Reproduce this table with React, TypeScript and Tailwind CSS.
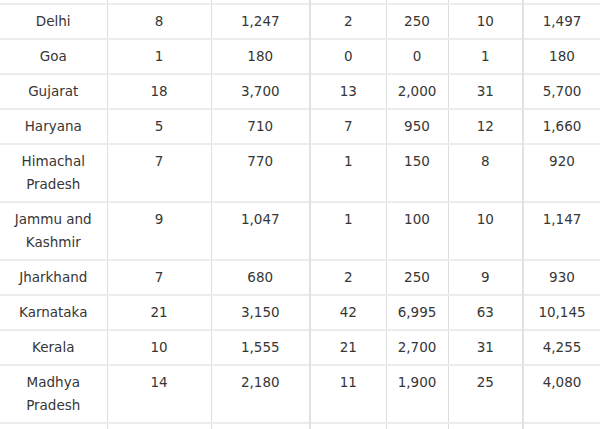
import React from "react";

type Row = [string, string, string, string, string, string, string];

const rows: Row[] = [
  ["", "", "", "", "", "", ""],
  ["Delhi", "8", "1,247", "2", "250", "10", "1,497"],
  ["Goa", "1", "180", "0", "0", "1", "180"],
  ["Gujarat", "18", "3,700", "13", "2,000", "31", "5,700"],
  ["Haryana", "5", "710", "7", "950", "12", "1,660"],
  ["Himachal Pradesh", "7", "770", "1", "150", "8", "920"],
  ["Jammu and Kashmir", "9", "1,047", "1", "100", "10", "1,147"],
  ["Jharkhand", "7", "680", "2", "250", "9", "930"],
  ["Karnataka", "21", "3,150", "42", "6,995", "63", "10,145"],
  ["Kerala", "10", "1,555", "21", "2,700", "31", "4,255"],
  ["Madhya Pradesh", "14", "2,180", "11", "1,900", "25", "4,080"],
  ["", "", "", "", "", "", ""],
];

const cellBorders = [
  "border-r border-r-[#dedede]",
  "border-r border-r-[#dedede]",
  "border-r-2 border-r-[#e2e2e2]",
  "border-r border-r-[#dedede]",
  "border-r border-r-[#dedede]",
  "border-r-2 border-r-[#e2e2e2]",
  "",
];

export default function App() {
  return (
    <div className="w-[600px] h-[429px] overflow-hidden bg-white">
      <table
        className="w-[600px] table-fixed border-collapse -mt-[30px] text-[13.5px] leading-[23px] text-[#363636]"
        style={{ fontFamily: '"DejaVu Sans", "Noto Sans", sans-serif' }}
      >
        <colgroup>
          <col className="w-[107px]" />
          <col className="w-[104px]" />
          <col className="w-[99px]" />
          <col className="w-[76px]" />
          <col className="w-[62px]" />
          <col className="w-[75px]" />
          <col className="w-[77px]" />
        </colgroup>
        <tbody>
          {rows.map((r, i) => (
            <tr key={i} className="border-b-2 border-b-[#ececec]">
              {r.map((c, j) => (
                <td
                  key={j}
                  className={`align-top text-center px-2 py-[5px] ${cellBorders[j]}`}
                >
                  {c || "\u00a0"}
                </td>
              ))}
            </tr>
          ))}
        </tbody>
      </table>
    </div>
  );
}
